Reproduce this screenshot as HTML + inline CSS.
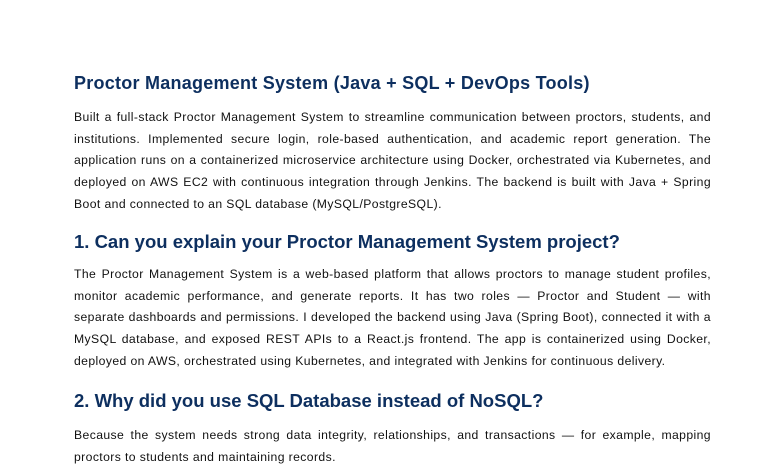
<!DOCTYPE html>
<html><head><meta charset="utf-8"><style>
body{margin:0;width:784px;height:441px;background:#fff;overflow:hidden;font-family:"Liberation Sans",Arial,sans-serif;}
.b{position:absolute;left:74px;width:637px;}
h1,h2{margin:0;color:#0d2f5f;font-weight:bold;white-space:nowrap;}
h1{font-size:18px;letter-spacing:0.25px;}
h2{font-size:18.5px;}
p{margin:0;font-size:12.2px;letter-spacing:0.4px;line-height:21.7px;color:#111;}
p span{display:block;text-align:justify;text-align-last:justify;white-space:nowrap;}
p span.l{text-align-last:left;}
</style></head><body>
<div class="b" style="top:73px"><h1>Proctor Management System (Java + SQL + DevOps Tools)</h1></div>
<div class="b" style="top:107px"><p>
<span>Built a full-stack Proctor Management System to streamline communication between proctors, students, and</span>
<span>institutions. Implemented secure login, role-based authentication, and academic report generation. The</span>
<span>application runs on a containerized microservice architecture using Docker, orchestrated via Kubernetes, and</span>
<span>deployed on AWS EC2 with continuous integration through Jenkins. The backend is built with Java + Spring</span>
<span class="l">Boot and connected to an SQL database (MySQL/PostgreSQL).</span></p></div>
<div class="b" style="top:231px"><h2>1. Can you explain your Proctor Management System project?</h2></div>
<div class="b" style="top:264px"><p>
<span>The Proctor Management System is a web-based platform that allows proctors to manage student profiles,</span>
<span>monitor academic performance, and generate reports. It has two roles — Proctor and Student — with</span>
<span>separate dashboards and permissions. I developed the backend using Java (Spring Boot), connected it with a</span>
<span>MySQL database, and exposed REST APIs to a React.js frontend. The app is containerized using Docker,</span>
<span class="l">deployed on AWS, orchestrated using Kubernetes, and integrated with Jenkins for continuous delivery.</span></p></div>
<div class="b" style="top:390px"><h2>2. Why did you use SQL Database instead of NoSQL?</h2></div>
<div class="b" style="top:425px"><p>
<span>Because the system needs strong data integrity, relationships, and transactions — for example, mapping</span>
<span class="l">proctors to students and maintaining records.</span></p></div>
</body></html>
